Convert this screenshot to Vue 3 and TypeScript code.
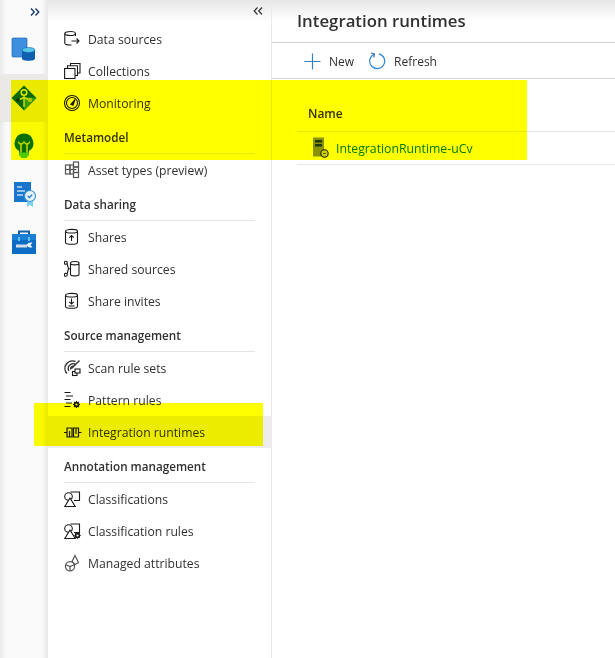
<script setup lang="ts">
interface Item { label: string; icon: string; active?: boolean }
interface Section { title?: string; items: Item[] }

const sections: Section[] = [
  { items: [
    { label: 'Data sources', icon: 'source' },
    { label: 'Collections', icon: 'collections' },
    { label: 'Monitoring', icon: 'monitor' },
  ] },
  { title: 'Metamodel', items: [{ label: 'Asset types (preview)', icon: 'asset' }] },
  { title: 'Data sharing', items: [
    { label: 'Shares', icon: 'shares' },
    { label: 'Shared sources', icon: 'shared' },
    { label: 'Share invites', icon: 'invites' },
  ] },
  { title: 'Source management', items: [
    { label: 'Scan rule sets', icon: 'scan' },
    { label: 'Pattern rules', icon: 'pattern' },
    { label: 'Integration runtimes', icon: 'runtime', active: true },
  ] },
  { title: 'Annotation management', items: [
    { label: 'Classifications', icon: 'class' },
    { label: 'Classification rules', icon: 'classrules' },
    { label: 'Managed attributes', icon: 'attrs' },
  ] },
]
</script>

<template>
  <div class="page">
    <aside class="rail">
      <div class="rail-toggle">
        <svg width="10" height="8" viewBox="0 0 10 8" fill="none" stroke="#12306a" stroke-width="1.300"><path d="M1 .5 4.300 4 1 7.500M5.500 .5 8.800 4 5.500 7.500"/></svg>
      </div>
      <div class="rail-btn">
        <svg width="26" height="26" viewBox="0 0 26 26">
          <rect x="1" y="1" width="15" height="19" rx="1" fill="#3f8fe0" stroke="#1a66b8" stroke-width=".7"/>
          <path d="M11 13v8.500c0 1.300 2.600 2.300 6.500 2.300s6.500-1 6.500-2.300V13z" fill="#0f5fb0"/>
          <ellipse cx="17.500" cy="13" rx="6.500" ry="2.500" fill="#55c8e8" stroke="#0f5fb0" stroke-width=".6"/>
        </svg>
      </div>
      <div class="rail-btn selected">
        <svg width="26" height="26" viewBox="0 0 26 26">
          <path d="M13 .5 25.500 13 13 25.500 .5 13z" fill="#0a6a38"/>
          <path d="M13 12 25.500 13 13 25.500z" fill="#3a9a20"/>
          <path d="M13 10v12M13 12.500 7.500 15M13 12.500l5.500 2.500" stroke="#d4e24a" stroke-width="1.400" fill="none"/>
          <circle cx="13" cy="7.500" r="2.800" fill="#0a6a38" stroke="#e0ea6a" stroke-width="1.500"/>
          <circle cx="7" cy="15" r="2" fill="#0b3d1c"/>
          <circle cx="19" cy="15" r="2.300" fill="#a6c41c"/>
        </svg>
      </div>
      <div class="rail-btn">
        <svg width="26" height="26" viewBox="0 0 26 26">
          <path d="M13 .5a9.500 9.500 0 0 0-5 17.500v2h10v-2A9.500 9.500 0 0 0 13 .5z" fill="#0c7030"/>
          <path d="M8 19.500h10v2.500l-2.500 3h-5L8 22z" fill="#52c81a"/>
          <path d="M10 10v9.500M16 10v9.500" stroke="#c4dc50" stroke-width="1.500" fill="none"/>
          <path d="M7.500 8.500c0 2 1.500 2.500 2.500 2.500s2.500-.5 2.500-2.500M13.500 8.500c0 2 1.500 2.500 2.500 2.500s2.500-.5 2.500-2.500" stroke="#c4dc50" stroke-width="1.200" fill="none"/>
        </svg>
      </div>
      <div class="rail-btn">
        <svg width="26" height="26" viewBox="0 0 26 26">
          <rect x="3" y="1" width="17" height="20" fill="#1a75cc"/>
          <path d="M6 6h5M6 10h8M6 14h6" stroke="#bcdcf5" stroke-width="1.300"/>
          <path d="M16 19v7l3-2 3 2v-7z" fill="#7fd0ee"/>
          <circle cx="19" cy="15" r="5.500" fill="#e4f2fb" stroke="#3c96dc" stroke-width="1.200"/>
          <path d="M16.800 15l1.600 1.600 2.800-3" stroke="#1a75cc" stroke-width="1.300" fill="none"/>
        </svg>
      </div>
      <div class="rail-btn">
        <svg width="26" height="26" viewBox="0 0 26 26">
          <path d="M8 6V2.500h10V6" fill="none" stroke="#125fa8" stroke-width="2"/>
          <rect x="1" y="5" width="24" height="20" fill="#0f6cc4"/>
          <rect x="1" y="5" width="24" height="6" fill="#1c7fd6"/>
          <rect x="7" y="8" width="2" height="4" fill="#5cc4ee"/>
          <rect x="17" y="8" width="2" height="4" fill="#5cc4ee"/>
          <path d="M5 15.500h11v3H5z" fill="#d6dee6"/>
          <path d="M16 15.500c1-1.800 3-2.500 5.500-1.800l-2 2.300 2 2.300c-2.500.7-4.500 0-5.500-1.800z" fill="#eef2f6"/>
        </svg>
      </div>
    </aside>

    <nav class="side">
      <div class="side-toggle">
        <svg width="10" height="8" viewBox="0 0 10 8" fill="none" stroke="#333" stroke-width="1.200"><path d="M4.500 .5 1.200 4l3.300 3.500M9 .5 5.700 4 9 7.500"/></svg>
      </div>
      <section v-for="(s, i) in sections" :key="i" class="group">
        <header v-if="s.title" class="group-title">{{ s.title }}</header>
        <div v-for="it in s.items" :key="it.label" class="item" :class="{ active: it.active }">
          <svg class="ico" width="18" height="18" viewBox="0 0 18 18" fill="none" stroke="#1a1a1a" stroke-width="1.100">
            <template v-if="it.icon === 'source'">
              <path d="M11.500 6V3.500C11.500 2.400 9.400 1.500 6.500 1.500S.8 2.400.8 3.500v9.500c0 1.100 2.400 2 5.200 2h1.500"/>
              <path d="M.8 3.500c0 1.100 2.800 2 5.700 2s5-.9 5-2M7.500 11h7.500M12.500 8.500 15 11l-2.500 2.500"/>
            </template>
            <template v-else-if="it.icon === 'collections'">
              <rect x=".6" y="6.500" width="10.400" height="10"/>
              <path d="M3.500 6.500V3.800H13.500V13.500H11"/>
              <path d="M6.500 3.800V1.500H16V11H13.500"/>
            </template>
            <template v-else-if="it.icon === 'monitor'">
              <circle cx="8" cy="9" r="7.500"/>
              <circle cx="8" cy="9" r="5.500"/>
              <path d="M6.800 10.300 11 5.500 9 11.200z" fill="#1a1a1a"/>
            </template>
            <template v-else-if="it.icon === 'asset'">
              <g stroke="#555" stroke-width="1.200">
                <rect x="1.500" y="4" width="4.500" height="9"/><path d="M1.500 8.500h11"/>
                <rect x="6" y="4" width="3.500" height="9"/>
                <rect x="9.500" y="1" width="5" height="5"/><rect x="9.500" y="6" width="5" height="5.500"/><rect x="9.500" y="11.500" width="5" height="5"/>
              </g>
            </template>
            <template v-else-if="it.icon === 'shares'">
              <path d="M1.500 3.200v11.300c0 1 2.600 1.800 6 1.800s6-.8 6-1.800V3.200c0-1-2.600-1.800-6-1.800s-6 .8-6 1.800z"/>
              <path d="M1.500 3.200c0 1 2.600 1.800 6 1.800s6-.8 6-1.800M7.500 13V7.500M5.300 9.700l2.200-2.200 2.200 2.200"/>
            </template>
            <template v-else-if="it.icon === 'shared'">
              <path d="M6.500 3.200v11c0 1 1.900 1.700 4.300 1.700s4.200-.7 4.200-1.700v-11c0-1-1.900-1.700-4.200-1.700S6.500 2.200 6.500 3.200zM6.500 3.200c0 1 1.900 1.700 4.300 1.700S15 4.200 15 3.200"/>
              <circle cx="1.800" cy="2.800" r="1.500"/><circle cx="1.800" cy="14.800" r="1.500"/>
              <path d="M3 3.500 4.500 8.800 3 14M4.500 8.800h2"/>
            </template>
            <template v-else-if="it.icon === 'invites'">
              <path d="M1.500 3.200v11.300c0 1 2.600 1.800 6 1.800s6-.8 6-1.800V3.200c0-1-2.600-1.800-6-1.800s-6 .8-6 1.800z"/>
              <path d="M1.500 3.200c0 1 2.600 1.800 6 1.800s6-.8 6-1.800M7.500 6.500v5.500M5.300 9.800l2.200 2.200 2.200-2.200M4.500 14h6"/>
            </template>
            <template v-else-if="it.icon === 'scan'">
              <path d="M11.500 2.500A7.500 7.500 0 0 0 3 14.500M11 5A5 5 0 0 0 4.800 12M10 7.300A2.500 2.500 0 0 0 6.800 10.500M7.500 9.500 15.500 1.500" stroke="#333" stroke-width="1.400"/>
              <rect x="8.500" y="12.500" width="4.500" height="4" fill="#fff"/><rect x="11" y="10" width="5" height="4" fill="#fff"/>
            </template>
            <template v-else-if="it.icon === 'pattern'">
              <path d="M.5 1.500h6M2 5h7M.5 8.500h6M2 12h6M.5 15.500h6"/>
              <circle cx="12.500" cy="13.500" r="1.900" stroke-width="1.700"/>
              <path d="M12.500 10v1.300M12.500 15.700V17M9 13.500h1.300M14.700 13.500H16M10 11l.9.9M14.100 15.100l.9.900M15 11l-.9.900M10.900 15.100l-.9.900" stroke-width="1.200"/>
            </template>
            <template v-else-if="it.icon === 'runtime'">
              <path d="M0 9.500h3M3 9.500V5h5v9H5.500V8M3 9.500V14h2.500M9.500 11V5h5v9H9.500V11M12 5V11M14.500 9.500H17.500" stroke-width="1.200"/>
            </template>
            <template v-else-if="it.icon === 'class' || it.icon === 'classrules'">
              <circle cx="4.500" cy="6.500" r="3.800"/>
              <path d="M6.500 2h9v8.500H10"/>
              <path d="M6 8 .8 16.500h10.400z" fill="#fff"/>
              <template v-if="it.icon === 'classrules'">
                <circle cx="13.500" cy="13.500" r="1.900" stroke-width="1.600" fill="#fff"/>
                <path d="M13.500 10.300v1.200M13.500 15.500v1.200M10.300 13.500h1.200M15.500 13.500h1.200M11.300 11.300l.8.800M14.900 14.900l.8.800M15.700 11.300l-.8.800M12.100 14.900l-.8.800"/>
              </template>
            </template>
            <template v-else>
              <g stroke="#555" stroke-width="1.200">
                <path d="M11 1.500 14.500 8.500 11 10.500 8 7.500z"/>
                <circle cx="6" cy="12.300" r="4.600"/>
                <path d="M1.800 10.800 6 12.500l4.200-1.700M6 12.500v4.300"/>
              </g>
            </template>
          </svg>
          <span>{{ it.label }}</span>
        </div>
      </section>
    </nav>

    <main class="main">
      <h1 class="title">Integration runtimes</h1>
      <div class="toolbar">
        <button class="tool">
          <svg width="17" height="17" viewBox="0 0 17 17"><path d="M8.500 0.500v16M0.500 8.500h16" stroke="#3a7fc4" stroke-width="1.200" fill="none"/></svg>
          <span>New</span>
        </button>
        <button class="tool">
          <svg width="18" height="18" viewBox="0 0 18 18" fill="none" stroke="#2e86d8" stroke-width="1.200"><path d="M6.200 2.200A7.500 7.500 0 1 0 11 1.800"/><path d="M3 1 6.500 2 5.800 5.500" stroke="#3a6ea8"/></svg>
          <span>Refresh</span>
        </button>
      </div>
      <div class="table">
        <div class="th">Name</div>
        <div class="tr">
          <svg width="18" height="22" viewBox="0 0 18 22">
            <rect x="1" y="0.500" width="11" height="19" fill="#8a9210"/>
            <rect x="3" y="3" width="7" height="2.500" fill="#1d3a12"/>
            <rect x="3" y="7" width="7" height="2.500" fill="#1d3a12"/>
            <circle cx="12.500" cy="16.500" r="3.700" fill="#c8d010" stroke="#222" stroke-width="1.100"/>
            <path d="M11 16.500h3" stroke="#445" stroke-width=".8"/>
          </svg>
          <a class="link">IntegrationRuntime-uCv</a>
        </div>
      </div>
    </main>

    <div class="mark mark-a"></div>
    <div class="mark mark-b"></div>
  </div>
</template>

<style>
html, body { margin: 0; background: #fff; }
</style>

<style scoped>
.page {
  position: relative;
  display: flex;
  width: 615px;
  height: 658px;
  overflow: hidden;
  font-family: "Open Sans", "Liberation Sans", sans-serif;
  background: #fff;
}
.rail {
  width: 48px;
  flex: none;
  display: flex;
  flex-direction: column;
  background: linear-gradient(90deg, #e9e9e9 0, #fafafa 6px, #fafafa 42px, #e8e8e8 48px);
}
.rail-toggle {
  height: 26px;
  box-sizing: border-box;
  display: flex;
  justify-content: flex-end;
  padding: 8px 8px 0 0;
}
.rail-btn {
  height: 48px;
  display: flex;
  align-items: center;
  justify-content: center;
}
.rail-btn.selected { background: #ebe9e6; }
.side {
  width: 224px;
  flex: none;
  box-sizing: border-box;
  padding: 0 16px;
  border-right: 1px solid #eaeaea;
  background: linear-gradient(180deg, #e6e6e6 0, #fff 22px);
}
.side-toggle {
  height: 23px;
  box-sizing: border-box;
  display: flex;
  justify-content: flex-end;
  padding-top: 7px;
  margin-right: -8px;
}
.group-title {
  height: 35px;
  box-sizing: border-box;
  line-height: 26px;
  padding-top: 5px;
  font-size: 11.7px;
  font-weight: 600;
  color: #323130;
  border-bottom: 1px solid #e6e6e6;
}
.item {
  height: 32px;
  display: flex;
  align-items: center;
  gap: 6px;
  font-size: 12.2px;
  color: #323130;
}
.item.active {
  background: #ececec;
  margin: 0 -16px;
  padding: 0 16px;
}
.ico { flex: none; }
.main {
  flex: 1;
  min-width: 0;
  background: linear-gradient(180deg, #e6e6e6 0, #fff 20px);
}
.title {
  margin: 0;
  height: 43px;
  box-sizing: border-box;
  padding: 4px 0 0 25px;
  font-size: 16.8px;
  line-height: 33px;
  font-weight: 600;
  color: #323130;
  border-bottom: 1px solid #d0d0d0;
}
.toolbar {
  height: 36px;
  box-sizing: border-box;
  display: flex;
  align-items: center;
  gap: 14px;
  padding: 1px 0 0 32px;
  border-bottom: 1px solid #d8d8d8;
}
.tool {
  display: flex;
  align-items: center;
  gap: 8px;
  padding: 0;
  border: 0;
  background: none;
  font: inherit;
  font-size: 12px;
  color: #323130;
}
.table { margin-left: 25px; }
.th {
  height: 53px;
  box-sizing: border-box;
  padding: 24px 0 0 11px;
  font-size: 12px;
  line-height: 22px;
  font-weight: 600;
  color: #323130;
  border-bottom: 1px solid #e6e6e6;
}
.tr {
  height: 33px;
  box-sizing: border-box;
  display: flex;
  align-items: center;
  gap: 6px;
  padding-left: 15px;
  border-bottom: 1px solid #eaeaea;
}
.link { font-size: 12.25px; color: #0078d4; }
.mark {
  position: absolute;
  background: #ffff00;
  mix-blend-mode: multiply;
}
.mark-a { left: 11px; top: 80px; width: 516px; height: 80px; }
.mark-b { left: 34px; top: 403px; width: 229px; height: 43px; }
</style>
